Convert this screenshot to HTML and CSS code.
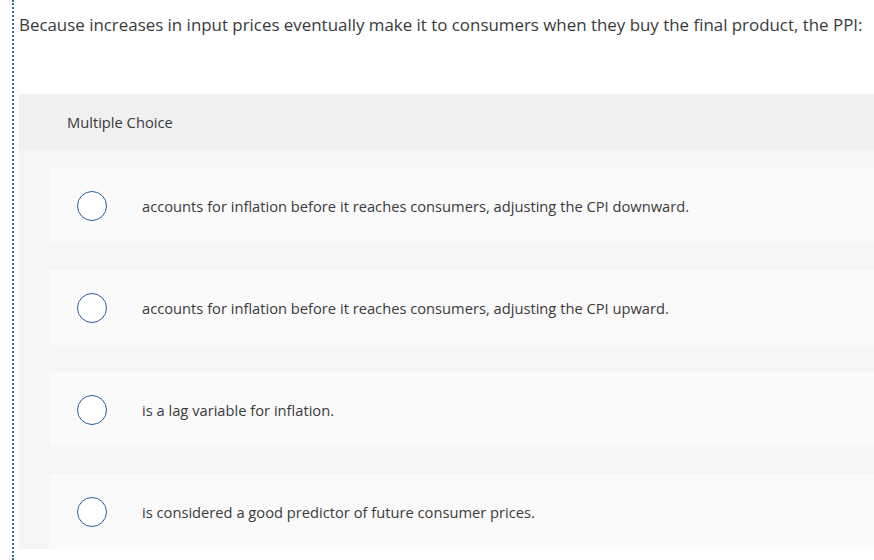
FILE: index.html
```html
<!DOCTYPE html>
<html>
<head>
<meta charset="utf-8">
<link rel="stylesheet" href="styles.css">
</head>
<body>
<div class="wrap">
  <p class="question">Because increases in input prices eventually make it to consumers when they buy the final product, the PPI:</p>
  <div class="panel">
    <div class="panel-head">Multiple Choice</div>
    <div class="panel-body">
      <div class="choice"><span class="radio"></span><span class="label">accounts for inflation before it reaches consumers, adjusting the CPI downward.</span></div>
      <div class="choice"><span class="radio"></span><span class="label">accounts for inflation before it reaches consumers, adjusting the CPI upward.</span></div>
      <div class="choice"><span class="radio"></span><span class="label">is a lag variable for inflation.</span></div>
      <div class="choice"><span class="radio"></span><span class="label">is considered a good predictor of future consumer prices.</span></div>
    </div>
  </div>
</div>
</body>
</html>
```

FILE: styles.css
```css
html, body {
  margin: 0;
  padding: 0;
  background: #ffffff;
  overflow: hidden;
}
body {
  font-family: "Open Sans", "Liberation Sans", sans-serif;
  color: #3a3a3a;
}
.wrap {
  margin-left: 12px;
  border-left: 2px dotted #2f6dbf;
  padding-left: 5px;
  padding-top: 14px;
  height: 560px;
  box-sizing: border-box;
}
.question {
  margin: 0;
  font-size: 16.9px;
  line-height: 22px;
  white-space: nowrap;
}
.panel {
  margin-top: 58px;
  margin-right: -20px;
  background: #f5f5f5;
}
.panel-head {
  background: #f0f0f0;
  height: 56px;
  display: flex;
  align-items: center;
  padding-left: 48px;
  font-size: 14.7px;
}
.panel-body {
  padding: 18px 0 0 30px;
  display: flex;
  flex-direction: column;
  gap: 27px;
}
.choice {
  background: #fafafa;
  border-radius: 3px;
  height: 75px;
  display: flex;
  align-items: center;
  padding-left: 28px;
}
.radio {
  width: 28px;
  height: 28px;
  border: 1.5px solid #2a5d96;
  border-radius: 50%;
  background: #ffffff;
  flex: none;
}
.label {
  margin-left: 35px;
  font-size: 14.7px;
}
```
